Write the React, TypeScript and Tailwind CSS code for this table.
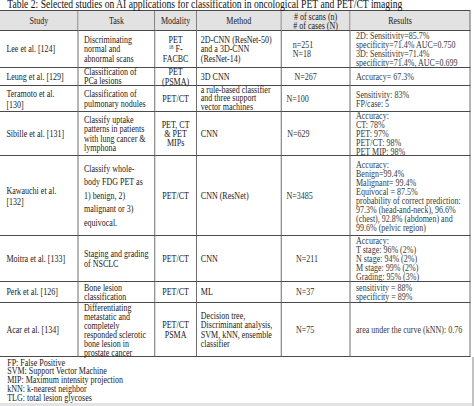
import React from "react";

const line = "border-[#4a4a4a]";

function Cell({
  children,
  className = "",
}: {
  children?: React.ReactNode;
  className?: string;
}) {
  return (
    <div
      className={
        "flex items-center border-r border-b border-[#4a4a4a] whitespace-nowrap " +
        className
      }
    >
      <div>{children}</div>
    </div>
  );
}

type Row = {
  study: React.ReactNode;
  task: React.ReactNode;
  modality: React.ReactNode;
  method: React.ReactNode;
  n: React.ReactNode;
  npad: string;
  results: React.ReactNode;
  taskLead?: string;
  methodLead?: string;
  studyLead?: string;
};

const L = (...lines: React.ReactNode[]) =>
  lines.map((l, i) => (
    <React.Fragment key={i}>
      {i > 0 && <br />}
      {l}
    </React.Fragment>
  ));

const rows: Row[] = [
  {
    study: "Lee et al. [124]",
    task: L("Discriminating", "normal and", "abnormal scans"),
    modality: L(
      "PET",
      <span key="s">
        <sup className="text-[6px]">18</sup> F-
      </span>,
      "FACBC"
    ),
    method: L("2D-CNN (ResNet-50)", "and a 3D-CNN", "(ResNet-14)"),
    n: L("n=251", "N=18"),
    npad: "pl-[14px]",
    results: L(
      "2D: Sensitivity=85.7%",
      "specificity=71.4% AUC=0.750",
      "3D: Sensitivity=71.4%",
      "specificity=71.4%, AUC=0.699"
    ),
  },
  {
    study: "Leung et al. [129]",
    task: L("Classification of", "PCa lesions"),
    taskLead: "leading-[8.5px]",
    modality: L("PET", "(PSMA)"),
    method: "3D CNN",
    n: "N=267",
    npad: "pl-[16px]",
    results: "Accuracy= 67.3%",
  },
  {
    study: L("Teramoto et al.", "[130]"),
    studyLead: "leading-[11px]",
    task: L("Classification of", "pulmonary nodules"),
    modality: "PET/CT",
    method: L("a rule-based classifier", "and three support", "vector machines"),
    methodLead: "leading-[8.6px]",
    n: "N=100",
    npad: "pl-[6px]",
    results: L("Sensitivity: 83%", "FP/case: 5"),
  },
  {
    study: "Sibille et al. [131]",
    task: L(
      "Classify uptake",
      "patterns in patients",
      "with lung cancer &",
      "lymphona"
    ),
    modality: L("PET, CT", "& PET", "MIPs"),
    method: "CNN",
    n: "N=629",
    npad: "pl-[7px]",
    results: L("Accuracy:", "CT: 78%", "PET: 97%", "PET/CT: 98%", "PET MIP: 98%"),
  },
  {
    study: L("Kawauchi et al.", "[132]"),
    studyLead: "leading-[11px]",
    task: L(
      "Classify whole-",
      "body FDG PET as",
      "1) benign, 2)",
      "malignant or 3)",
      "equivocal."
    ),
    taskLead: "leading-[13.5px]",
    modality: "PET/CT",
    method: "CNN (ResNet)",
    n: "N=3485",
    npad: "pl-[6px]",
    results: L(
      "Accuracy:",
      "Benign=99.4%",
      "Malignant= 99.4%",
      "Equivocal = 87.5%",
      "probability of correct prediction:",
      "97.3% (head-and-neck), 96.6%",
      "(chest), 92.8% (abdomen) and",
      "99.6% (pelvic region)"
    ),
  },
  {
    study: "Moitra et al. [133]",
    task: L("Staging and grading", "of NSCLC"),
    modality: "PET/CT",
    method: "CNN",
    n: "N=211",
    npad: "pl-[18px]",
    results: L(
      "Accuracy:",
      "T stage: 96% (2%)",
      "N stage: 94% (2%)",
      "M stage: 99% (2%)",
      "Grading: 95% (3%)"
    ),
  },
  {
    study: "Perk et al. [126]",
    task: L("Bone lesion", "classification"),
    taskLead: "leading-[9px]",
    modality: "PET/CT",
    method: "ML",
    n: "N=37",
    npad: "pl-[18px]",
    results: L("sensitivity = 88%", "specificity = 89%"),
  },
  {
    study: "Acar et al. [134]",
    task: L(
      "Differentiating",
      "metastatic and",
      "completely",
      "responded sclerotic",
      "bone lesion in",
      "prostate cancer"
    ),
    taskLead: "leading-[9px]",
    modality: L("PET/CT", "PSMA"),
    method: L(
      "Decision tree,",
      "Discriminant analysis,",
      "SVM, kNN, ensemble",
      "classifier"
    ),
    n: "N=75",
    npad: "pl-[18px]",
    results: "area under the curve (kNN): 0.76",
  },
];

export default function App() {
  return (
    <div className="w-[474px] h-[406px] overflow-hidden bg-white">
      <div className="w-[592.5px] origin-top-left scale-x-[0.8] font-['Liberation_Serif','Times_New_Roman',serif] text-[#1c1c1c]">
        <div className="h-[10px] pl-[9px] text-[12px] leading-[9px] whitespace-nowrap text-[#111]">
          Table 2: Selected studies on AI applications for classification in oncological PET and PET/CT imaging
        </div>
        <div
          className={
            "grid w-[588px] grid-cols-[98px_96px_52px_106px_86px_150px] grid-rows-[20px_37px_18px_26px_44px_80px_46px_21px_54px] border-t bg-white text-[10px] leading-[9.3px] " +
            line
          }
        >
          {/* header */}
          <Cell className="justify-center bg-[#e2e2e2]">Study</Cell>
          <Cell className="justify-center bg-[#e2e2e2]">Task</Cell>
          <Cell className="justify-center bg-[#e2e2e2]">Modality</Cell>
          <Cell className="justify-center bg-[#e2e2e2]">Method</Cell>
          <Cell className="justify-center bg-[#e2e2e2] text-center leading-[9px]">
            {L("# of scans (n)", "# of cases (N)")}
          </Cell>
          <Cell className="justify-center bg-[#e2e2e2] pr-[25px]">Results</Cell>

          {rows.map((r, i) => (
            <React.Fragment key={i}>
              <Cell className={"pl-[8px] " + (r.studyLead ?? "")}>{r.study}</Cell>
              <Cell className={"pl-[7px] " + (r.taskLead ?? "")}>{r.task}</Cell>
              <Cell className="justify-center text-center">{r.modality}</Cell>
              <Cell className={"pl-[5px] " + (r.methodLead ?? "")}>{r.method}</Cell>
              <Cell className={r.npad + " text-[#333]"}>{r.n}</Cell>
              <Cell className="pl-[7px] text-[#3a3a3a] leading-[9px]">{r.results}</Cell>
            </React.Fragment>
          ))}
        </div>
        <div className="flex h-[49px]">
          <div className="flex flex-1 flex-col">
            <div className="h-[46px] pl-[9px] pt-[1.5px] text-[10px] leading-[8.75px] whitespace-nowrap text-[#1c1c1c]">
              {L(
                "FP: False Positive",
                "SVM: Support Vector Machine",
                "MIP: Maximum intensity projection",
                "kNN: k-nearest neighbor",
                "TLG: total lesion glycoses"
              )}
            </div>
            <div className="h-[3px] bg-[#e3e3e3]" />
          </div>
          <div className="w-[3px] bg-[#c2c2c2]" />
        </div>
      </div>
    </div>
  );
}
